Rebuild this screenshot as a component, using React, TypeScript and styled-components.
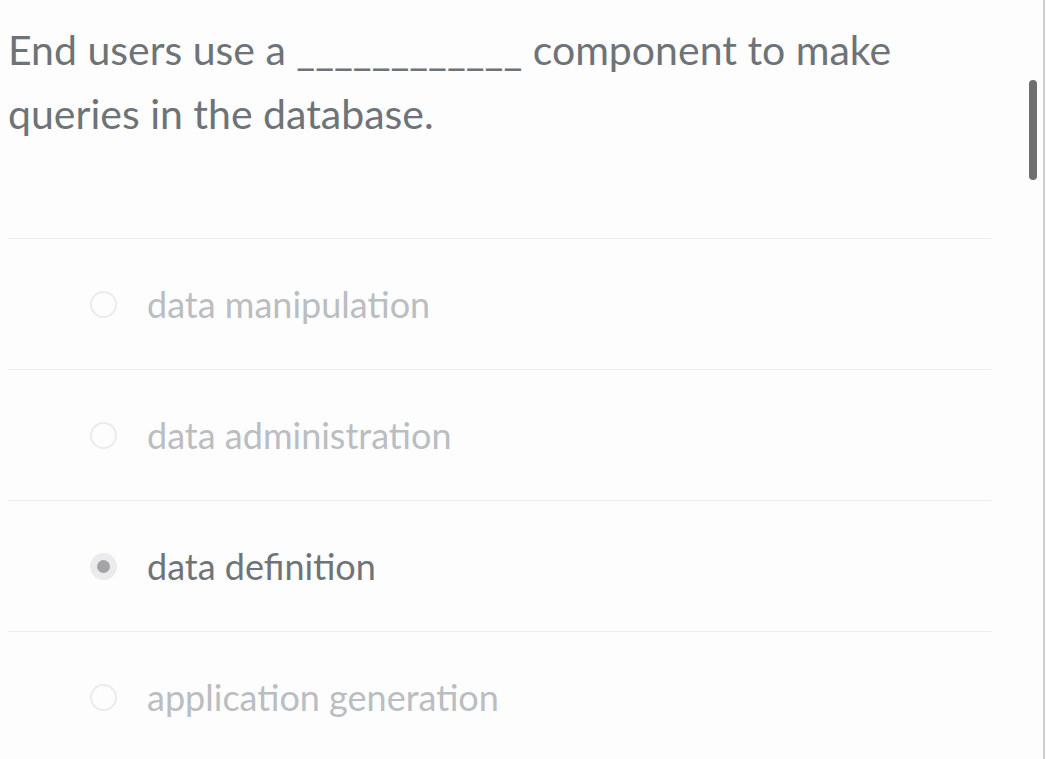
import React from "react";
import styled, { createGlobalStyle } from "styled-components";

const GlobalStyle = createGlobalStyle`
  html, body {
    margin: 0;
    padding: 0;
    background: #fdfdfd;
  }
  body {
    font-family: Lato, "Open Sans", sans-serif;
  }
`;

const Page = styled.div`
  position: relative;
  width: 1043px;
  height: 759px;
  overflow: hidden;
  border-right: 2px solid #cfcfcf;
  background: #fdfdfd;
`;

const Content = styled.div`
  width: 983px;
  padding-left: 8px;
`;

const Question = styled.p`
  margin: 0;
  padding-top: 18px;
  font-size: 41px;
  line-height: 64px;
  color: #6d7378;
  height: 220px;
`;

const Options = styled.div`
  display: flex;
  flex-direction: column;
`;

const Option = styled.label<{ $selected?: boolean }>`
  display: flex;
  align-items: center;
  height: 130px;
  border-top: 1.5px solid #ededf0;
  padding-left: 82px;
  gap: 30px;
  font-size: 36px;
  color: ${(p) => (p.$selected ? "#6f7479" : "#babdc1")};
`;

const Radio = styled.span<{ $selected?: boolean }>`
  position: relative;
  width: 27px;
  height: 27px;
  border-radius: 50%;
  box-sizing: border-box;
  border: ${(p) => (p.$selected ? "none" : "2px solid #ebebee")};
  background: ${(p) => (p.$selected ? "#ebebee" : "#fdfdfd")};
  flex-shrink: 0;
  &::after {
    content: "";
    display: ${(p) => (p.$selected ? "block" : "none")};
    position: absolute;
    left: 7px;
    top: 7px;
    width: 13px;
    height: 13px;
    border-radius: 50%;
    background: #a3a3a8;
  }
`;

const ScrollThumb = styled.div`
  position: absolute;
  right: 6px;
  top: 80px;
  width: 8px;
  height: 100px;
  border-radius: 4px;
  background: #6f6f6f;
`;

const options = [
  { text: "data manipulation" },
  { text: "data administration" },
  { text: "data definition", selected: true },
  { text: "application generation" },
];

export default function App() {
  return (
    <Page>
      <GlobalStyle />
      <Content>
        <Question>
          End users use a ____________ component to make queries in the
          database.
        </Question>
        <Options>
          {options.map((o) => (
            <Option key={o.text} $selected={o.selected}>
              <Radio $selected={o.selected} />
              {o.text}
            </Option>
          ))}
        </Options>
      </Content>
      <ScrollThumb />
    </Page>
  );
}
